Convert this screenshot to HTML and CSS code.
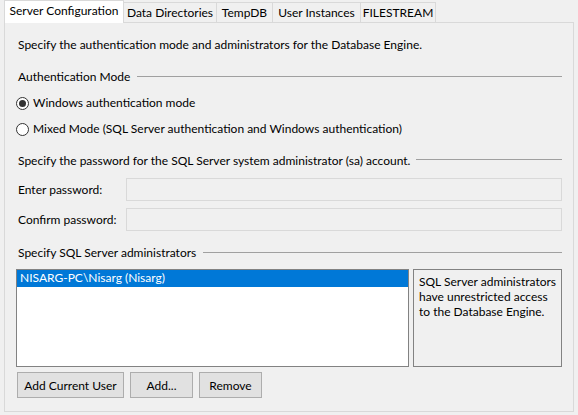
FILE: index.html
```html
<!DOCTYPE html>
<html>
<head>
<meta charset="utf-8">
<link rel="stylesheet" href="styles.css">
</head>
<body>
<div class="window">
  <div class="tabs">
    <div class="tab active t-server">Server Configuration</div>
    <div class="tab t-data">Data Directories</div>
    <div class="tab t-temp">TempDB</div>
    <div class="tab t-user">User Instances</div>
    <div class="tab t-file">FILESTREAM</div>
  </div>
  <div class="panel">
    <div class="text intro">Specify the authentication mode and administrators for the Database Engine.</div>
    <div class="group-head g-auth"><span class="text">Authentication Mode</span><span class="rule"></span></div>
    <div class="radio r-win"><span class="dot checked"></span><span>Windows authentication mode</span></div>
    <div class="radio r-mixed"><span class="dot"></span><span>Mixed Mode (SQL Server authentication and Windows authentication)</span></div>
    <div class="group-head g-pw"><span class="text">Specify the password for the SQL Server system administrator (sa) account.</span><span class="rule"></span></div>
    <div class="field f-enter"><span class="text label">Enter password:</span><span class="input"></span></div>
    <div class="field f-confirm"><span class="text label">Confirm password:</span><span class="input"></span></div>
    <div class="group-head g-admin"><span class="text">Specify SQL Server administrators</span><span class="rule"></span></div>
    <div class="admins">
      <div class="list">
        <div class="item selected">NISARG-PC\Nisarg (Nisarg)</div>
      </div>
      <div class="info">SQL Server administrators<br>have unrestricted access<br>to the Database Engine.</div>
    </div>
    <div class="buttons">
      <button class="btn b-current">Add Current User</button>
      <button class="btn b-add">Add...</button>
      <button class="btn b-remove">Remove</button>
    </div>
  </div>
</div>
</body>
</html>
```
FILE: styles.css
```css
* { box-sizing: border-box; }
html, body {
  margin: 0;
  padding: 0;
  background: #f0f0f0;
}
body {
  font-family: "Lato", "Liberation Sans", sans-serif;
  font-size: 12px;
  color: #000;
}
.window {
  width: 578px;
  height: 415px;
  overflow: hidden;
}
.tabs {
  display: flex;
  align-items: flex-end;
  height: 22px;
  padding-left: 4px;
}
.tab {
  height: 20px;
  border: 1px solid #d9d9d9;
  border-bottom: none;
  margin-left: -1px;
  background: #f0f0f0;
  line-height: 20px;
  text-align: center;
  white-space: nowrap;
}
.tab.active {
  height: 23px;
  margin-left: 0;
  margin-bottom: -1px;
  background: #fff;
  line-height: 20px;
  position: relative;
  z-index: 1;
}
.t-server { width: 120px; }
.t-data { width: 94px; }
.t-temp { width: 57px; }
.t-user { width: 89px; }
.t-file { width: 76px; }

.panel {
  margin-left: 4px;
  width: 570px;
  height: 390px;
  border: 1px solid #d9d9d9;
  padding: 14px 11px 0 11px;
  display: flex;
  flex-direction: column;
}
.text { line-height: 16px; }
.intro { margin-left: 2px; }
.group-head {
  display: flex;
  align-items: center;
  height: 16px;
  padding-left: 2px;
}
.group-head .text { white-space: nowrap; }
.rule {
  flex: 1;
  height: 1px;
  background: #a0a0a0;
  margin-left: 7px;
  margin-top: -1px;
}
.g-auth { margin-top: 16px; }
.g-pw { margin-top: 16px; }
.g-pw .rule { margin-top: -3px; margin-left: 6px; }
.g-admin { margin-top: 14px; }
.g-admin .rule { margin-top: -2px; }

.radio {
  display: flex;
  align-items: center;
  height: 16px;
  line-height: 16px;
  margin-top: 10px;
}
.dot {
  width: 13px;
  height: 13px;
  border: 1px solid #333;
  border-radius: 50%;
  background: #fff;
  margin-right: 4px;
  display: flex;
  align-items: center;
  justify-content: center;
  flex: none;
}
.dot.checked::after {
  content: "";
  width: 7px;
  height: 7px;
  border-radius: 50%;
  background: #333;
}

.field {
  display: flex;
  align-items: center;
  height: 23px;
}
.f-enter { margin-top: 9px; }
.f-confirm { margin-top: 7px; }
.label {
  width: 110px;
  padding-left: 2px;
}
.input {
  flex: 1;
  height: 23px;
  border: 1px solid #d9d9d9;
  background: #f0f0f0;
}

.admins {
  display: flex;
  margin-top: 8px;
  height: 98px;
  gap: 4px;
}
.list {
  width: 395px;
  height: 98px;
  border: 1px solid #828282;
  background: #fff;
}
.item {
  height: 17px;
  line-height: 16px;
  padding-left: 3px;
  white-space: nowrap;
}
.item.selected {
  background: #0078d7;
  color: #fff;
}
.info {
  flex: 1;
  border: 1px solid #828282;
  padding: 4px 5px;
  line-height: 15px;
  white-space: nowrap;
}

.buttons {
  display: flex;
  gap: 6px;
  margin-top: 5px;
  padding-left: 1px;
}
.btn {
  height: 26px;
  border: 1px solid #adadad;
  background: #e1e1e1;
  font-family: inherit;
  font-size: 12px;
  color: #000;
  padding: 0;
  border-radius: 0;
}
.b-current { width: 107px; }
.b-add { width: 63px; }
.b-remove { width: 63px; }
```
